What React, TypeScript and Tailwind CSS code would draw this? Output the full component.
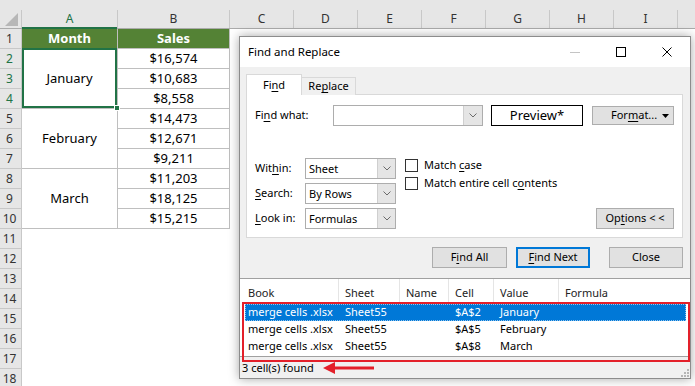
import type { ReactNode } from "react";

const months = [
  { name: "January", sales: ["$16,574", "$10,683", "$8,558"] },
  { name: "February", sales: ["$14,473", "$12,671", "$9,211"] },
  { name: "March", sales: ["$11,203", "$18,125", "$15,215"] },
];

const results = [
  { cell: "$A$2", value: "January" },
  { cell: "$A$5", value: "February" },
  { cell: "$A$8", value: "March" },
];

const rowNums = Array.from({ length: 18 }, (_, i) => i + 1);
const moreCols = ["C", "D", "E", "F", "G", "H", "I"];

function U({ children }: { children: ReactNode }) {
  return <span className="underline underline-offset-[2px]">{children}</span>;
}

function Chevron() {
  return (
    <svg width="8" height="5" viewBox="0 0 8 5">
      <polyline points="0.5,0.5 4,4 7.5,0.5" fill="none" stroke="#6b6b6b" strokeWidth="1" />
    </svg>
  );
}

function Select({ value }: { value: string }) {
  return (
    <div className="flex h-[21px] w-[91px] border border-[#adadad] bg-white">
      <span className="flex-1 pl-[3px] leading-[19px]">{value}</span>
      <span className="flex w-[18px] items-center justify-center border-l border-[#cfcfcf] bg-[#e5e5e5]">
        <Chevron />
      </span>
    </div>
  );
}

function Check({ children }: { children: ReactNode }) {
  return (
    <div className="flex h-[13px] items-center gap-[6px]">
      <span className="h-[13px] w-[13px] border border-[#333] bg-white" />
      <span>{children}</span>
    </div>
  );
}

function Btn({ children, w, primary }: { children: ReactNode; w: string; primary?: boolean }) {
  return (
    <div
      className={`flex h-[21px] items-center justify-center bg-[#e1e1e1] ${w} ${
        primary ? "border-2 border-[#0078d7]" : "border border-[#adadad]"
      }`}
    >
      {children}
    </div>
  );
}

function Sheet() {
  return (
    <div className="flex flex-col font-['Noto_Sans',sans-serif] text-[13px] text-black">
      <div className="h-[10px] bg-[#e6e6e6]" />
      <div className="flex h-[19px] border-b border-[#ababab] bg-[#e6e6e6] text-[12px] leading-[18px] text-[#333]">
        <div className="relative w-[22px] shrink-0 border-r border-[#c8c8c8]">
          <div className="absolute bottom-[2px] right-[3px] h-0 w-0 border-b-[13px] border-l-[13px] border-b-[#b7b7b7] border-l-transparent" />
        </div>
        <div className="relative w-[96px] shrink-0 border-r border-[#c8c8c8] text-center text-[#217346]">
          A
          <div className="absolute bottom-[-1px] left-0 right-0 h-[2px] bg-[#217346]" />
        </div>
        <div className="w-[112px] shrink-0 border-r border-[#c8c8c8] text-center">B</div>
        {moreCols.map((c) => (
          <div key={c} className="w-[64px] shrink-0 border-r border-[#c8c8c8] text-center">
            {c}
          </div>
        ))}
        <div className="flex-1" />
      </div>

      <div className="flex">
        <div className="flex w-[22px] shrink-0 flex-col text-[12px] text-[#333]">
          {rowNums.map((n) => (
            <div
              key={n}
              className={`flex h-[20px] items-center justify-center border-b border-r border-[#c8c8c8] bg-[#e6e6e6] pr-[2px] ${
                n >= 2 && n <= 4 ? "text-[#217346]" : ""
              }`}
            >
              {n}
            </div>
          ))}
        </div>

        <div className="flex w-[96px] shrink-0 flex-col">
          <div className="flex h-[20px] items-center justify-center border-b border-r border-[#bfbfbf] bg-[#548235] font-bold text-white">
            Month
          </div>
          {months.map((m, i) => (
            <div key={m.name} className="relative flex h-[60px] items-center justify-center border-b border-r border-[#bfbfbf]">
              {m.name}
              {i === 0 && (
                <>
                  <div className="absolute bottom-0 left-0 right-0 top-[-1px] border-2 border-[#217346]" />
                  <div className="absolute bottom-[-3px] right-[-3px] z-10 h-[6px] w-[6px] border border-white bg-[#217346]" />
                </>
              )}
            </div>
          ))}
        </div>

        <div className="flex w-[112px] shrink-0 flex-col">
          <div className="flex h-[20px] items-center justify-center border-b border-r border-[#bfbfbf] bg-[#548235] font-bold text-white">
            Sales
          </div>
          {months.flatMap((m) => m.sales).map((s) => (
            <div key={s} className="flex h-[20px] items-center justify-center border-b border-r border-[#bfbfbf]">
              {s}
            </div>
          ))}
        </div>
      </div>
    </div>
  );
}

function Dialog() {
  return (
    <div className="absolute left-[239px] top-[36px] flex h-[343px] w-[452px] flex-col border border-[#8c8c8c] bg-[#f0f0f0] font-['Noto_Sans',sans-serif] text-[11px] text-black shadow-[0_0_10px_rgba(0,0,0,0.35)]">
      {/* title bar */}
      <div className="flex h-[30px] shrink-0 items-center bg-white">
        <span className="flex-1 pl-[8px] text-[11.5px]">Find and Replace</span>
        <div className="flex h-full w-[46px] items-center justify-center">
          <span className="h-px w-[10px] bg-[#c4c4c4]" />
        </div>
        <div className="flex h-full w-[46px] items-center justify-center">
          <span className="h-[10px] w-[10px] border border-black" />
        </div>
        <div className="flex h-full w-[46px] items-center justify-center">
          <svg width="10" height="10" viewBox="0 0 10 10">
            <path d="M0.5 0.5 L9.5 9.5 M9.5 0.5 L0.5 9.5" stroke="#000" strokeWidth="1" />
          </svg>
        </div>
      </div>

      {/* options area */}
      <div className="pl-[6px] pr-[7px] pt-[7px]">
        <div className="relative z-10 -mb-px flex h-[21px] items-end">
          <div className="flex h-[21px] w-[56px] items-center justify-center border border-b-0 border-[#d9d9d9] bg-white">
            Fi<U>n</U>d
          </div>
          <div className="flex h-[18px] w-[54px] items-center justify-center border border-b-0 border-l-0 border-[#d9d9d9] bg-[#f0f0f0]">
            Re<U>p</U>lace
          </div>
        </div>
        <div className="flex h-[144px] flex-col border border-[#d9d9d9] bg-white pl-[8px] pr-[8px] pt-[10px]">
          <div className="flex h-[21px] items-center">
            <span className="w-[78px]">
              Fi<U>n</U>d what:
            </span>
            <div className="flex h-[21px] w-[150px] border border-[#adadad] bg-white">
              <span className="flex-1" />
              <span className="flex w-[19px] items-center justify-center border-l border-[#cfcfcf] bg-[#e5e5e5]">
                <Chevron />
              </span>
            </div>
            <div className="ml-[8px] flex h-[21px] w-[92px] items-center justify-center border border-black bg-white text-[13px]">
              Preview*
            </div>
            <div className="ml-[9px] flex h-[19px] w-[82px] items-center border border-[#adadad] bg-[#e1e1e1] pl-[18px] pr-[4px]">
              <span className="flex-1">
                For<U>m</U>at...
              </span>
              <svg width="7" height="4" viewBox="0 0 7 4">
                <polygon points="0,0 7,0 3.5,4" fill="#000" />
              </svg>
            </div>
          </div>

          <div className="mt-[32px] flex items-end">
            <div className="flex flex-col gap-[4px]">
              <div className="flex items-center">
                <span className="w-[50px]">
                  Wit<U>h</U>in:
                </span>
                <Select value="Sheet" />
              </div>
              <div className="flex items-center">
                <span className="w-[50px]">
                  <U>S</U>earch:
                </span>
                <Select value="By Rows" />
              </div>
              <div className="flex items-center">
                <span className="w-[50px]">
                  <U>L</U>ook in:
                </span>
                <Select value="Formulas" />
              </div>
            </div>
            <div className="ml-[9px] flex flex-col gap-[5px] self-start pt-[1px]">
              <Check>
                Match <U>c</U>ase
              </Check>
              <Check>
                Match entire cell c<U>o</U>ntents
              </Check>
            </div>
            <div className="flex-1" />
            <Btn w="w-[78px]">
              Op<U>t</U>ions &lt; &lt;
            </Btn>
          </div>
        </div>

        <div className="mt-[9px] flex justify-end">
          <Btn w="w-[75px]">
            F<U>i</U>nd All
          </Btn>
          <div className="ml-[9px]">
            <Btn w="w-[74px]" primary>
              <U>F</U>ind Next
            </Btn>
          </div>
          <div className="ml-[19px]">
            <Btn w="w-[74px]">Close</Btn>
          </div>
        </div>
      </div>

      {/* results list */}
      <div className="mt-[10px] flex h-[79px] flex-col border-b border-t border-[#a0a0a0] bg-white">
        <div className="flex h-[24px] shrink-0 text-[#222]">
          <span className="flex h-full w-[99px] items-center border-r border-[#e5e5e5] pl-[8px] pt-[5px]">Book</span>
          <span className="flex h-full w-[61px] items-center border-r border-[#e5e5e5] pl-[6px] pt-[5px]">Sheet</span>
          <span className="flex h-full w-[49px] items-center border-r border-[#e5e5e5] pl-[6px] pt-[5px]">Name</span>
          <span className="flex h-full w-[45px] items-center border-r border-[#e5e5e5] pl-[6px] pt-[5px]">Cell</span>
          <span className="flex h-full w-[65px] items-center border-r border-[#e5e5e5] pl-[6px] pt-[5px]">Value</span>
          <span className="flex h-full flex-1 items-center pl-[6px] pt-[5px]">Formula</span>
        </div>
        <div className="mt-[1px] flex flex-col">
          {results.map((r, i) => (
            <div
              key={r.cell}
              className={`ml-[5px] flex h-[17px] w-[441px] items-center ${
                i === 0 ? "bg-[#0078d7] text-white outline-1 -outline-offset-1 outline-dotted outline-[#8fc3ee]" : ""
              }`}
            >
              <span className="w-[94px] pl-[3px]">merge cells .xlsx</span>
              <span className="w-[61px] pl-[6px]">Sheet55</span>
              <span className="w-[49px]" />
              <span className="w-[45px] pl-[6px]">{r.cell}</span>
              <span className="w-[65px] pl-[6px]">{r.value}</span>
            </div>
          ))}
        </div>
      </div>

      {/* status bar */}
      <div className="relative flex flex-1 items-center pl-[2px] pt-[1px]">
        3 cell(s) found
        <svg className="absolute bottom-[1px] right-[1px]" width="10" height="10" viewBox="0 0 10 10">
          <g fill="#b5b5b5">
            <rect x="8" y="2" width="2" height="2" />
            <rect x="5" y="5" width="2" height="2" />
            <rect x="8" y="5" width="2" height="2" />
            <rect x="2" y="8" width="2" height="2" />
            <rect x="5" y="8" width="2" height="2" />
            <rect x="8" y="8" width="2" height="2" />
          </g>
        </svg>
      </div>
    </div>
  );
}

export default function App() {
  return (
    <div className="relative h-[386px] w-[695px] overflow-hidden bg-white">
      <Sheet />
      <Dialog />
      {/* annotations */}
      <div className="absolute left-[242px] top-[302px] h-[60px] w-[448px] border-2 border-[#e3202a]" />
      <svg className="absolute left-[323px] top-[362px]" width="52" height="12" viewBox="0 0 52 12">
        <polygon points="0,6 12,0 12,12" fill="#e3202a" />
        <line x1="10" y1="6" x2="51" y2="6" stroke="#e3202a" strokeWidth="3" />
      </svg>
    </div>
  );
}
